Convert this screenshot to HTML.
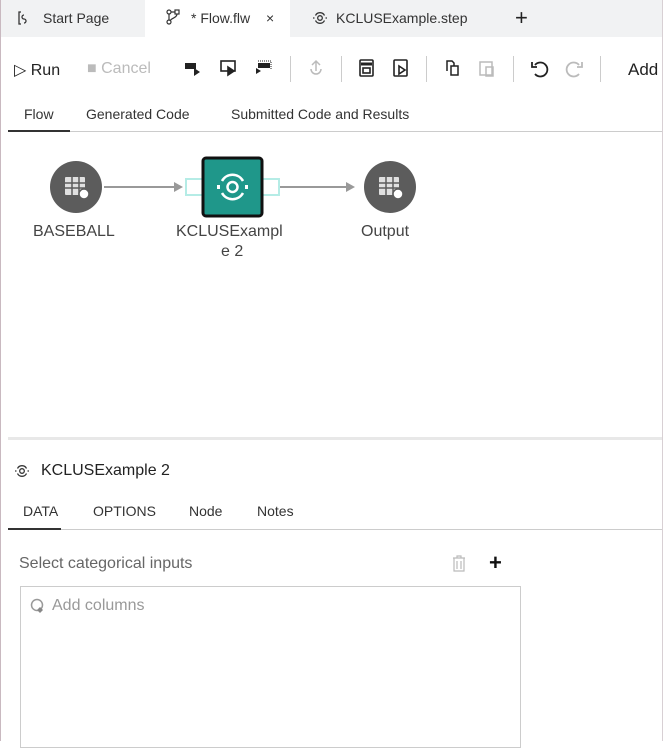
<!DOCTYPE html><html><head><style>
body{margin:0;width:663px;height:741px;overflow:hidden;background:#fff;font-family:"Liberation Sans",sans-serif;color:#333;position:relative}
.a{position:absolute;white-space:nowrap}
.ic{position:absolute}
</style></head><body>
<div class="a" style="left:0;top:0;width:1px;height:741px;background:#c9b9c0"></div>
<div class="a" style="right:0;top:0;width:1px;height:741px;background:#d8d0d4"></div>
<div class="a" style="left:1px;top:0;width:661px;height:37px;background:#f1f2f3"></div>
<div class="a" style="left:145px;top:0;width:145px;height:37px;background:#fff"></div>
<svg class="ic" style="left:16px;top:10px" width="16" height="16" viewBox="0 0 16 16" fill="none" stroke="#333" stroke-width="1.3"><path d="M5 2H3v12h2M8 5a2 2 0 1 0 0 4a2 2 0 1 1 0 4"/></svg>
<div class="a" style="left:43px;top:10px;font-size:14px">Start Page</div>
<svg class="ic" style="left:165px;top:9px" width="16" height="16" viewBox="0 0 16 16" fill="none" stroke="#333" stroke-width="1.2"><circle cx="4" cy="3" r="2"/><rect x="10" y="1" width="4" height="4"/><circle cx="4" cy="13" r="2"/><path d="M4 5v6M6 3h4M12 5c0 4-6 4-7 7"/></svg>
<div class="a" style="left:191px;top:10px;font-size:14px">* Flow.flw</div>
<div class="a" style="left:266px;top:10px;font-size:14px">×</div>
<svg class="ic" style="left:312px;top:10px" width="16" height="16" viewBox="0 0 16 16" fill="none" stroke="#333" stroke-width="1.3"><circle cx="8" cy="8" r="2.3"/><path d="M3.5 5.5a5 5 0 0 1 9 0M3.5 10.5a5 5 0 0 0 9 0"/><path d="M1 8h1.5M13.5 8H15"/></svg>
<div class="a" style="left:336px;top:10px;font-size:14px">KCLUSExample.step</div>
<div class="a" style="left:515px;top:5px;font-size:22px;color:#222">+</div>
<!-- toolbar -->
<div class="a" style="left:14px;top:60px;font-size:16px;color:#222">▷ Run</div>
<div class="a" style="left:87px;top:60px;font-size:16px;color:#bbb">■ Cancel</div>
<svg class="ic" style="left:184px;top:60px" width="18" height="18" viewBox="0 0 18 18" fill="#222"><rect x="1" y="3" width="11" height="6"/><path d="M10 8l6 4-6 4z"/></svg>
<svg class="ic" style="left:220px;top:59px" width="18" height="18" viewBox="0 0 18 18" fill="none" stroke="#222" stroke-width="1.6"><rect x="1" y="2" width="14" height="10"/><path d="M8 8l6 4-6 4z" fill="#222"/></svg>
<svg class="ic" style="left:255px;top:59px" width="18" height="18" viewBox="0 0 18 18" fill="#222"><rect x="3" y="4" width="12" height="5"/><path d="M1 9l5 3-5 3z"/><path d="M3 2h13v9" fill="none" stroke="#222" stroke-dasharray="1 1"/></svg>
<div class="a" style="left:290px;top:56px;width:1px;height:26px;background:#ccc"></div>
<svg class="ic" style="left:307px;top:58px" width="18" height="20" viewBox="0 0 18 20" fill="none" stroke="#bbb" stroke-width="1.5"><path d="M9 13V3M5 7l4-4 4 4M4 11a5 5 0 0 0 10 0"/></svg>
<div class="a" style="left:341px;top:56px;width:1px;height:26px;background:#ccc"></div>
<svg class="ic" style="left:358px;top:59px" width="18" height="18" viewBox="0 0 18 18" fill="none" stroke="#222" stroke-width="1.6"><rect x="2" y="1" width="13" height="16" rx="1"/><rect x="5" y="9" width="7" height="5"/><path d="M3 5h11" stroke-width="3"/></svg>
<svg class="ic" style="left:392px;top:59px" width="18" height="18" viewBox="0 0 18 18" fill="none" stroke="#222" stroke-width="1.6"><rect x="2" y="1" width="13" height="16" rx="1"/><path d="M7 7l6 4-6 4z"/></svg>
<div class="a" style="left:426px;top:56px;width:1px;height:26px;background:#ccc"></div>
<svg class="ic" style="left:444px;top:59px" width="18" height="18" viewBox="0 0 18 18" fill="none" stroke="#222" stroke-width="1.5"><path d="M3 12V2h5l2 2v3"/><rect x="7" y="7" width="7" height="9"/></svg>
<svg class="ic" style="left:478px;top:59px" width="18" height="18" viewBox="0 0 18 18" fill="none" stroke="#bbb" stroke-width="1.5"><rect x="2" y="3" width="12" height="13"/><rect x="8" y="8" width="7" height="9"/></svg>
<div class="a" style="left:513px;top:56px;width:1px;height:26px;background:#ccc"></div>
<svg class="ic" style="left:529px;top:58px" width="22" height="22" viewBox="0 0 22 22" fill="none" stroke="#222" stroke-width="1.8"><path d="M6 7a7 7 0 1 1 0 9"/><path d="M3 4v5h5" /></svg>
<svg class="ic" style="left:563px;top:58px" width="22" height="22" viewBox="0 0 22 22" fill="none" stroke="#bbb" stroke-width="1.8"><path d="M16 7a7 7 0 1 0 0 9"/><path d="M19 4v5h-5"/></svg>
<div class="a" style="left:600px;top:56px;width:1px;height:26px;background:#ccc"></div>
<div class="a" style="left:628px;top:60px;font-size:17px;color:#222">Add</div>
<!-- subtabs -->
<div class="a" style="left:24px;top:106px;font-size:14px">Flow</div>
<div class="a" style="left:86px;top:106px;font-size:14px">Generated Code</div>
<div class="a" style="left:231px;top:106px;font-size:14px">Submitted Code and Results</div>
<div class="a" style="left:8px;top:131px;width:654px;height:1px;background:#ccc"></div>
<div class="a" style="left:8px;top:130px;width:62px;height:2px;background:#333"></div>
<!-- flow -->
<svg class="ic" style="left:0;top:150px" width="440" height="80">
<circle cx="76" cy="37" r="26" fill="#5c5c5c"/>
<circle cx="390" cy="37" r="26" fill="#5c5c5c"/>
<g fill="#e0e0e0"><rect x="65" y="27" width="20" height="18" rx="1"/></g>
<g fill="#e0e0e0"><rect x="379" y="27" width="20" height="18" rx="1"/></g>
<g stroke="#5c5c5c" stroke-width="1.5"><path d="M65 33h20M65 38h20M72 27v18M79 27v18M379 33h20M379 38h20M386 27v18M393 27v18"/></g>
<circle cx="84" cy="44" r="5" fill="#fff" stroke="#5c5c5c" stroke-width="1.5"/>
<circle cx="398" cy="44" r="5" fill="#fff" stroke="#5c5c5c" stroke-width="1.5"/>
<path d="M104 37h74M280 37h68" stroke="#999" stroke-width="2"/>
<path d="M174 32l9 5-9 5zM346 32l9 5-9 5z" fill="#999"/>
<rect x="186" y="29" width="17" height="16" fill="none" stroke="#b5ece6" stroke-width="2"/>
<rect x="262" y="29" width="17" height="16" fill="none" stroke="#b5ece6" stroke-width="2"/>
<rect x="203" y="8" width="59" height="58" rx="3" fill="#1f978a" stroke="#111" stroke-width="3"/>
<circle cx="232.5" cy="37" r="5" fill="none" stroke="#fff" stroke-width="2.5"/>
<path d="M222 31a12 12 0 0 1 21 0M222 43a12 12 0 0 0 21 0" fill="none" stroke="#fff" stroke-width="2.5"/>
<rect x="217" y="35" width="3" height="4" fill="#fff"/><rect x="245" y="35" width="3" height="4" fill="#fff"/>
</svg>
<div class="a" style="left:33px;top:223px;font-size:16px;color:#444">BASEBALL</div>
<div class="a" style="left:176px;top:223px;font-size:16px;color:#444">KCLUSExampl</div>
<div class="a" style="left:221px;top:243px;font-size:16px;color:#444">e 2</div>
<div class="a" style="left:361px;top:223px;font-size:16px;color:#444">Output</div>
<!-- panel -->
<div class="a" style="left:8px;top:437px;width:654px;height:3px;background:#e8e8e8"></div>
<svg class="ic" style="left:14px;top:463px" width="16" height="16" viewBox="0 0 16 16" fill="none" stroke="#333" stroke-width="1.3"><circle cx="8" cy="8" r="2.3"/><path d="M3.5 5.5a5 5 0 0 1 9 0M3.5 10.5a5 5 0 0 0 9 0"/><path d="M1 8h1.5M13.5 8H15"/></svg>
<div class="a" style="left:41px;top:462px;font-size:16px;color:#222">KCLUSExample 2</div>
<div class="a" style="left:23px;top:503px;font-size:14px">DATA</div>
<div class="a" style="left:93px;top:503px;font-size:14px">OPTIONS</div>
<div class="a" style="left:189px;top:503px;font-size:14px">Node</div>
<div class="a" style="left:257px;top:503px;font-size:14px">Notes</div>
<div class="a" style="left:8px;top:529px;width:654px;height:1px;background:#ccc"></div>
<div class="a" style="left:8px;top:528px;width:53px;height:2px;background:#333"></div>
<div class="a" style="left:19px;top:555px;font-size:16px;color:#666">Select categorical inputs</div>
<svg class="ic" style="left:452px;top:555px" width="14" height="17" viewBox="0 0 14 17" fill="none" stroke="#bbb" stroke-width="1.2"><path d="M1 3h12M5 3V1h4v2M2 3v13h10V3M5 6v8M9 6v8"/></svg>
<div class="a" style="left:489px;top:550px;font-size:22px;color:#111;font-weight:bold">+</div>
<div class="a" style="left:20px;top:586px;width:499px;height:160px;border:1px solid #ccc"></div>
<svg class="ic" style="left:30px;top:598px" width="16" height="16" viewBox="0 0 16 16"><circle cx="7" cy="7" r="5.5" fill="none" stroke="#999" stroke-width="1.5"/><path d="M10 9l3 3-3 3-3-3z" fill="#888"/></svg>
<div class="a" style="left:52px;top:597px;font-size:16px;color:#999">Add columns</div>
</body></html>
